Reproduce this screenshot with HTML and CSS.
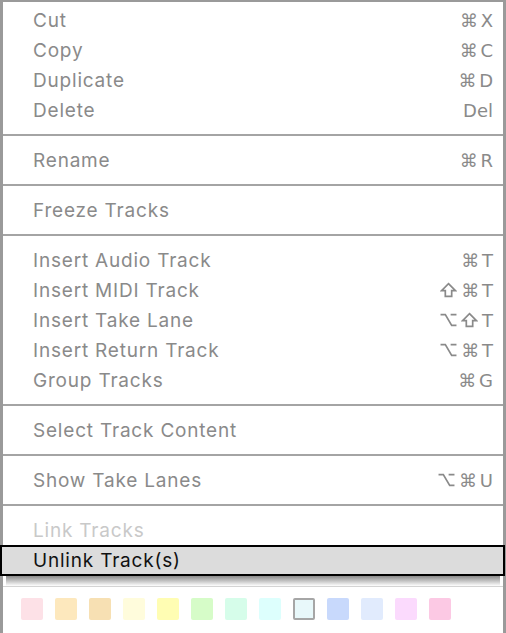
FILE: index.html
```html
<!DOCTYPE html>
<html lang="en">
<head>
  <meta charset="UTF-8" />
  <title>Track Menu</title>
  <link rel="stylesheet" href="styles.css">
</head>
<body>
  <div class="menu">
    <div class="group">
      <div class="item"><span>Cut</span><span class="keys">⌘ X</span></div>
      <div class="item"><span>Copy</span><span class="keys">⌘ C</span></div>
      <div class="item"><span>Duplicate</span><span class="keys">⌘ D</span></div>
      <div class="item"><span>Delete</span><span class="keys">Del</span></div>
    </div>
    <div class="sep"></div>
    <div class="group">
      <div class="item"><span>Rename</span><span class="keys">⌘ R</span></div>
    </div>
    <div class="sep"></div>
    <div class="group">
      <div class="item"><span>Freeze Tracks</span></div>
    </div>
    <div class="sep"></div>
    <div class="group">
      <div class="item"><span>Insert Audio Track</span><span class="keys">⌘ T</span></div>
      <div class="item"><span>Insert MIDI Track</span><span class="keys"><svg class="mod" viewBox="0 0 16 15"><path d="M8 1.5 L14.5 8 H11 V13.5 H5 V8 H1.5 Z"/></svg>⌘ T</span></div>
      <div class="item"><span>Insert Take Lane</span><span class="keys"><svg class="mod" viewBox="0 0 16 15"><path d="M0.5 2.5 H5 L11 12.5 H15.5 M10 2.5 H15.5"/></svg><svg class="mod" viewBox="0 0 16 15"><path d="M8 1.5 L14.5 8 H11 V13.5 H5 V8 H1.5 Z"/></svg>T</span></div>
      <div class="item"><span>Insert Return Track</span><span class="keys"><svg class="mod" viewBox="0 0 16 15"><path d="M0.5 2.5 H5 L11 12.5 H15.5 M10 2.5 H15.5"/></svg>⌘ T</span></div>
      <div class="item"><span>Group Tracks</span><span class="keys">⌘ G</span></div>
    </div>
    <div class="sep"></div>
    <div class="group">
      <div class="item"><span>Select Track Content</span></div>
    </div>
    <div class="sep"></div>
    <div class="group">
      <div class="item"><span>Show Take Lanes</span><span class="keys"><svg class="mod" viewBox="0 0 16 15"><path d="M0.5 2.5 H5 L11 12.5 H15.5 M10 2.5 H15.5"/></svg>⌘ U</span></div>
    </div>
    <div class="sep"></div>
    <div class="group">
      <div class="item disabled"><span>Link Tracks</span></div>
      <div class="item active"><span>Unlink Track(s)</span></div>
    </div>
    <div class="shadow"></div>
    <div class="swatches">
      <span class="swatch" style="background:#fde1e7"></span>
      <span class="swatch" style="background:#fde8bd"></span>
      <span class="swatch" style="background:#f7e0b3"></span>
      <span class="swatch" style="background:#fffcdc"></span>
      <span class="swatch" style="background:#fffdb3"></span>
      <span class="swatch" style="background:#d6fcc8"></span>
      <span class="swatch" style="background:#d6fdea"></span>
      <span class="swatch" style="background:#ddfffd"></span>
      <span class="swatch selected" style="background:#e8f8fa"></span>
      <span class="swatch" style="background:#c8d9fc"></span>
      <span class="swatch" style="background:#e1ebfd"></span>
      <span class="swatch" style="background:#fbdafd"></span>
      <span class="swatch" style="background:#fcc9e4"></span>
    </div>
  </div>
</body>
</html>
```

FILE: styles.css
```css
body {
  margin: 0;
  background: #fff;
  font-family: Inter, "Noto Sans", sans-serif;
}
.menu {
  height: 631px;
  background: #fff;
  border-top: 2px solid #9a9a9a;
  border-left: 3px solid #9a9a9a;
  border-right: 3px solid #9a9a9a;
  padding-top: 3px;
}
.item {
  height: 30px;
  display: flex;
  align-items: center;
  justify-content: space-between;
  padding: 0 10px 0 30px;
  font-size: 19px;
  letter-spacing: 0.8px;
  color: #8a8a8a;
}
.keys {
  display: flex;
  align-items: center;
  font-family: "DejaVu Sans", sans-serif;
  font-size: 18px;
  letter-spacing: 0;
  word-spacing: -3px;
}
.mod {
  width: 17px;
  height: 16px;
  margin-right: 4px;
  fill: none;
  stroke: #8a8a8a;
  stroke-width: 1.6;
}
.sep {
  height: 2px;
  margin: 9px 0;
  background: #a4a4a4;
}
.item.disabled {
  color: #c9c9c9;
}
.item.active {
  color: #111;
  background: #dcdcdc;
  border: 2px solid #000;
  height: 27px;
  margin: 0 -2px 0 -3px;
  padding-left: 31px;
}
.shadow {
  height: 10px;
  margin: 0 3px;
  background: linear-gradient(#8a8a8a, #fff);
}
.swatches {
  border-top: 1px solid #d4d4d4;
  display: flex;
  gap: 12px;
  padding: 11px 18px;
}
.swatch {
  width: 22px;
  height: 22px;
  border-radius: 2px;
}
.swatch.selected {
  box-sizing: border-box;
  border: 2px solid #a6a6a6;
}
```
